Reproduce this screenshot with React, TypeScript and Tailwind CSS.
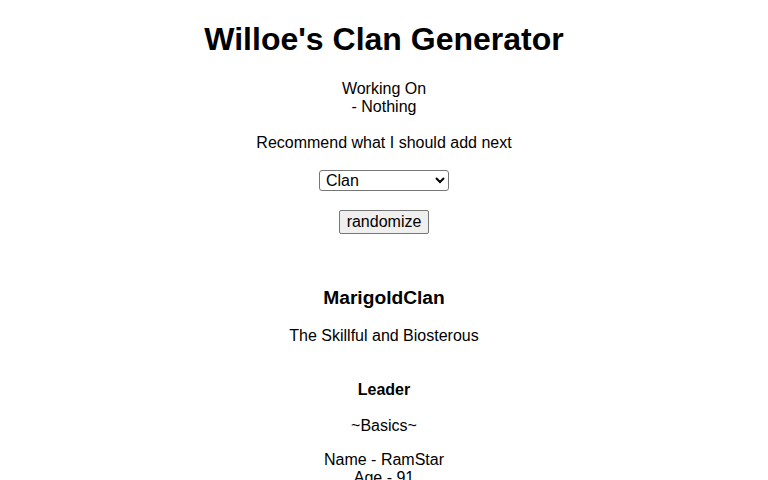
import React from "react";

export default function App() {
  return (
    <div className="flex min-h-[480px] w-full flex-col items-center bg-white text-center text-[16px] leading-[normal] text-black [font-family:'Liberation_Sans',Arial,sans-serif]">
      <h1 className="mt-[21.44px] text-[32px] font-bold leading-[normal]">Willoe's Clan Generator</h1>
      <p className="mt-[21.44px]">
        Working On
        <br />- Nothing
      </p>
      <p className="mt-[18px]">Recommend what I should add next</p>
      <div className="mt-[18px] flex h-[21px]">
        <select
          defaultValue="Clan"
          className="h-[21px] w-[130px] rounded-[3px] border border-[#767676] bg-white pl-[2px] text-[16px] leading-[normal] text-black"
        >
          <option>Clan</option>
          <option>Cat</option>
          <option>Leader</option>
        </select>
      </div>
      <button className="mt-[19px] h-[24px] w-[90px] rounded-[2px] border border-[#767676] bg-[#efefef] px-[6px] text-[16px] leading-[normal] text-black">
        randomize
      </button>
      <h3 className="mt-[53.5px] text-[19.2px] font-bold leading-[normal]">MarigoldClan</h3>
      <p className="mt-[17.5px]">The Skillful and Biosterous</p>
      <h4 className="mt-[36px] font-bold">Leader</h4>
      <p className="mt-[18px]">~Basics~</p>
      <p className="mt-[16px]">
        Name - RamStar
        <br />
        Age - 91
      </p>
    </div>
  );
}
